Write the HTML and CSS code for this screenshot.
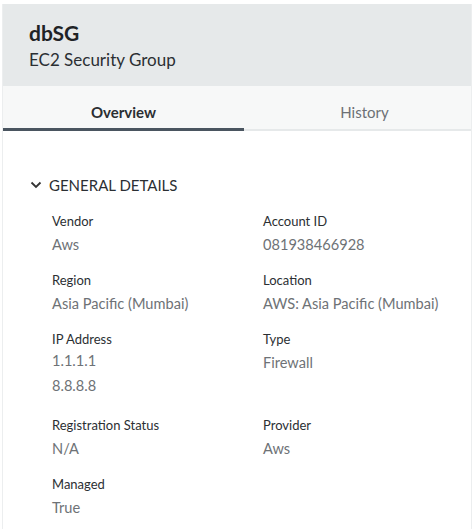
FILE: index.html
```html
<!DOCTYPE html>
<html lang="en">
<head>
  <meta charset="UTF-8" />
  <title>dbSG - EC2 Security Group</title>
  <meta name="viewport" content="width=device-width, initial-scale=1" />
  <link rel="stylesheet" href="styles.css">
</head>
<body>
  <div class="panel">
    <div class="header">
      <h1>dbSG</h1>
      <div class="subtitle">EC2 Security Group</div>
    </div>

    <div class="tabs">
      <div class="tab active">Overview</div>
      <div class="tab">History</div>
    </div>

    <div class="content">
      <div class="section-title">
        <svg class="chevron" width="12" height="8" viewBox="0 0 12 8">
          <path d="M1.5 1.5 L6 6 L10.5 1.5" fill="none" stroke="#333" stroke-width="1.8" />
        </svg>
        GENERAL DETAILS
      </div>

      <div class="details">
        <div class="field">
          <div class="label">Vendor</div>
          <div class="value">Aws</div>
        </div>
        <div class="field">
          <div class="label">Account ID</div>
          <div class="value">081938466928</div>
        </div>
        <div class="field">
          <div class="label">Region</div>
          <div class="value">Asia Pacific (Mumbai)</div>
        </div>
        <div class="field">
          <div class="label">Location</div>
          <div class="value">AWS: Asia Pacific (Mumbai)</div>
        </div>
        <div class="field multi">
          <div class="label">IP Address</div>
          <div class="value">1.1.1.1</div>
          <div class="value extra">8.8.8.8</div>
        </div>
        <div class="field">
          <div class="label">Type</div>
          <div class="value">Firewall</div>
        </div>
        <div class="field">
          <div class="label">Registration Status</div>
          <div class="value">N/A</div>
        </div>
        <div class="field">
          <div class="label">Provider</div>
          <div class="value">Aws</div>
        </div>
        <div class="field">
          <div class="label">Managed</div>
          <div class="value">True</div>
        </div>
      </div>
    </div>
  </div>
</body>
</html>
```

FILE: styles.css
```css
* {
  box-sizing: border-box;
  margin: 0;
  padding: 0;
}

body {
  font-family: Lato, 'Open Sans', Arial, sans-serif;
  background: #fff;
  color: #2b2f33;
  padding: 4px 2px 0 2px;
}

.panel {
  border-left: 1px solid #eceeef;
  border-right: 1px solid #eceeef;
  min-height: 525px;
}

.header {
  background: #e6e9ea;
  height: 82px;
  padding: 16px 26px 0;
}

h1 {
  font-size: 21px;
  font-weight: 700;
  color: #1f2326;
  line-height: 26px;
}

.subtitle {
  font-size: 17px;
  color: #2b2f33;
  line-height: 24px;
  margin-top: 2px;
}

.tabs {
  display: grid;
  grid-template-columns: 241px 1fr;
  background: #f7f8f8;
  height: 45px;
  border-bottom: 2px solid #e6e9ea;
}

.tab {
  text-align: center;
  font-size: 15px;
  line-height: 20px;
  padding-top: 16px;
  color: #6c7075;
}

.tab:last-child {
  padding-left: 14px;
}

.tab.active {
  font-weight: 700;
  color: #2b2f33;
  border-bottom: 3px solid #4a5560;
  margin-bottom: -2px;
}

.content {
  padding: 44px 20px 0 27px;
}

.section-title {
  display: flex;
  align-items: center;
  gap: 7px;
  font-size: 15px;
  color: #2b2f33;
  line-height: 20px;
}

.chevron {
  display: block;
}

.details {
  display: grid;
  grid-template-columns: 211px 1fr;
  row-gap: 16px;
  padding: 17px 0 0 22px;
}

.label {
  font-size: 13px;
  line-height: 18px;
  color: #2b2f33;
}

.value {
  font-size: 14.6px;
  line-height: 20px;
  color: #6e7276;
  margin-top: 5px;
}

.field.multi .value {
  margin-top: 3px;
}

.field.multi .value.extra {
  margin-top: 5px;
}

.field.multi {
  padding-bottom: 4px;
}
```
